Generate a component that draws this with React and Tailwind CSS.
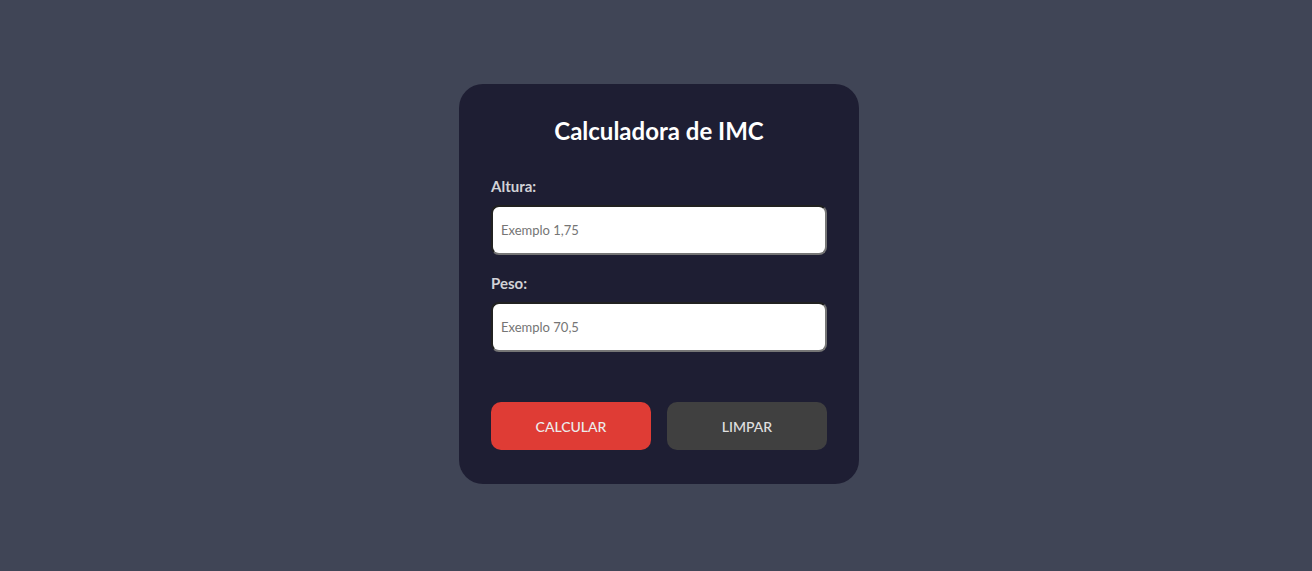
import { useState } from "react";

export default function App() {
  const [altura, setAltura] = useState("");
  const [peso, setPeso] = useState("");

  const limpar = () => {
    setAltura("");
    setPeso("");
  };

  return (
    <div
      className="flex min-h-[571px] w-full items-center justify-center bg-[#404556] pb-[3px] pl-[6px]"
      style={{ fontFamily: "Lato, 'Open Sans', sans-serif" }}
    >
      <div className="flex w-[400px] flex-col rounded-[24px] bg-[#1e1e33] px-8 pt-[32px] pb-[34px]">
        <h1 className="text-center text-[24px] leading-[30px] font-bold text-white">
          Calculadora de IMC
        </h1>

        {/* Altura */}
        <label className="mt-[30px] text-[15px] leading-[20px] font-bold text-[#d2d2d6]">Altura:</label>
        <input
          type="text"
          value={altura}
          onChange={(e) => setAltura(e.target.value)}
          placeholder="Exemplo 1,75"
          className="mt-[9px] h-[50px] w-full shrink-0 rounded-[8px] border-2 border-[#767676] bg-white px-2 text-[13px] text-[#333] outline-none [border-style:inset] placeholder:text-[#757575]"
        />

        {/* Peso */}
        <label className="mt-[18px] text-[15px] leading-[20px] font-bold text-[#d2d2d6]">Peso:</label>
        <input
          type="text"
          value={peso}
          onChange={(e) => setPeso(e.target.value)}
          placeholder="Exemplo 70,5"
          className="mt-[9px] h-[50px] w-full shrink-0 rounded-[8px] border-2 border-[#767676] bg-white px-2 text-[13px] text-[#333] outline-none [border-style:inset] placeholder:text-[#757575]"
        />

        <div className="mt-[50px] flex gap-4">
          <button className="h-[48px] flex-1 rounded-[10px] bg-[#df3c35] text-[14px] font-medium text-[#ececec]">
            CALCULAR
          </button>
          <button
            onClick={limpar}
            className="h-[48px] flex-1 rounded-[10px] bg-[#404040] text-[14px] font-medium text-[#e0e0e0]"
          >
            LIMPAR
          </button>
        </div>
      </div>
    </div>
  );
}
